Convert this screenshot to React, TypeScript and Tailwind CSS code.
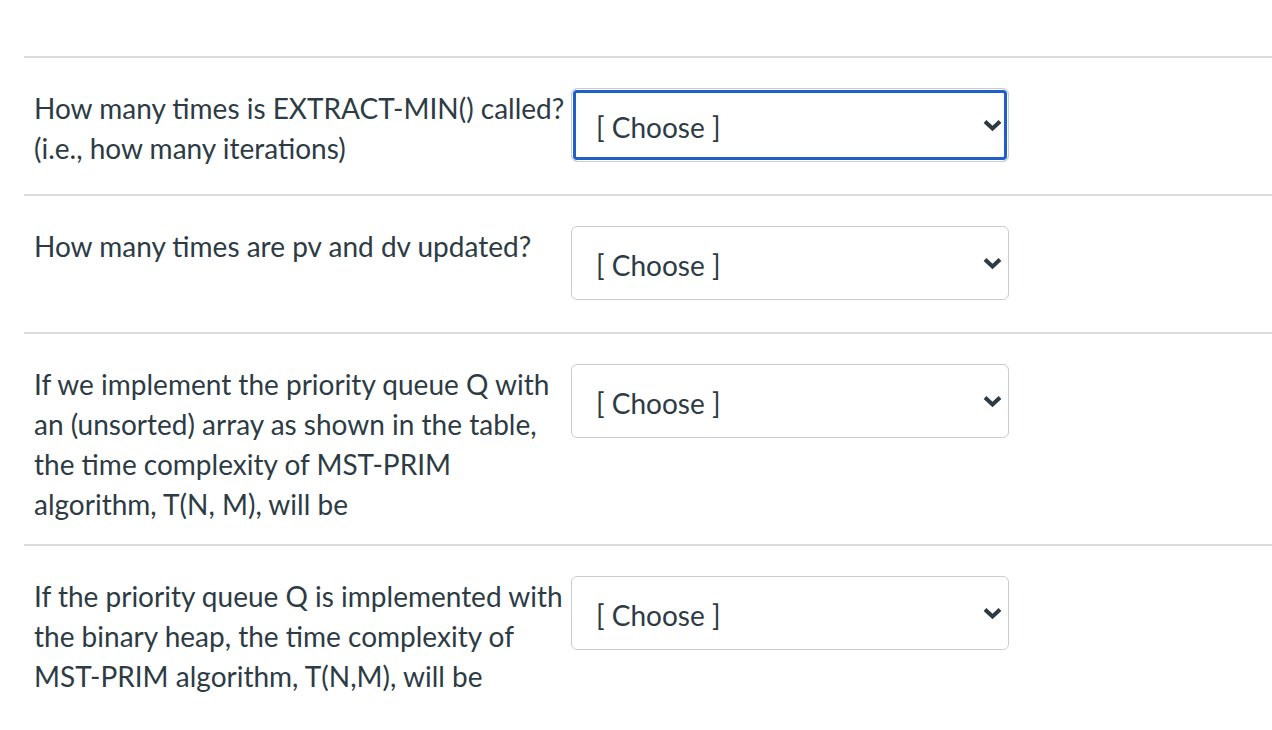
const ROWS = [
  {
    label: "How many times is EXTRACT-MIN() called? (i.e., how many iterations)",
    focused: true,
  },
  { label: "How many times are pv and dv updated?" },
  {
    label:
      "If we implement the priority queue Q with an (unsorted) array as shown in the table, the time complexity of MST-PRIM algorithm, T(N, M), will be",
  },
  {
    label:
      "If the priority queue Q is implemented with the binary heap, the time complexity of MST-PRIM algorithm, T(N,M), will be",
  },
];

function Chevron() {
  return (
    <svg width="19" height="13" viewBox="0 0 19 13" fill="none" aria-hidden="true">
      <path d="M2 2.5 L9.5 9.5 L17 2.5" stroke="#2d3b45" strokeWidth="4" strokeLinejoin="miter" />
    </svg>
  );
}

function ChooseBox({ focused }: { focused?: boolean }) {
  return (
    <div
      className={
        focused
          ? "mb-3 flex h-[74px] w-[438px] shrink-0 items-center justify-between rounded-[6px] border border-[#c7cdd1] pl-[24px] pr-[6px] shadow-[inset_0_0_0_1px_#ffffff,inset_0_0_0_4px_#1f5fc9]"
          : "mb-3 flex h-[74px] w-[438px] shrink-0 items-center justify-between rounded-[6px] border border-[#c7cdd1] pl-[24px] pr-[6px]"
      }
    >
      <span className="pt-1 text-[28px] leading-[40px] text-[#2d3b45]">[ Choose ]</span>
      <Chevron />
    </div>
  );
}

export default function App() {
  return (
    <div
      className="min-h-screen bg-white pl-6 pt-[56px] text-[#2d3b45]"
      style={{ fontFamily: "Lato, 'Open Sans', sans-serif" }}
    >
      {ROWS.map((row, i) => (
        <div key={i} className="flex items-start border-t-2 border-[#dcdcdc] pb-5 pt-[30px]">
          <p className="w-[547px] shrink-0 pl-[10px] text-[28px] leading-[40px]">{row.label}</p>
          <ChooseBox focused={row.focused} />
        </div>
      ))}
    </div>
  );
}
